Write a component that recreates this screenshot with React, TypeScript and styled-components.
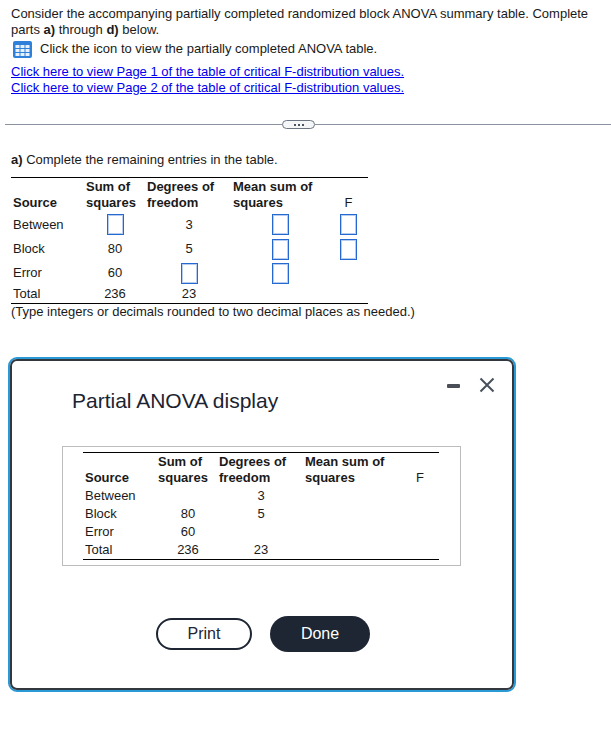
import React from "react";
import styled, { createGlobalStyle } from "styled-components";

const Global = createGlobalStyle`
  html, body { margin: 0; padding: 0; background: #fff; }
  body { font-family: "Liberation Sans", Arial, sans-serif; font-size: 13px; color: #1a1a1a; }
`;

const Page = styled.div`
  width: 611px;
  height: 752px;
  overflow: hidden;
  display: flex;
  flex-direction: column;
`;

const Intro = styled.div`
  padding: 6px 0 0 11px;
  line-height: 16px;
`;

const IconLine = styled.div`
  display: flex;
  align-items: center;
  gap: 8px;
  height: 20px;
  margin: 1px 0 5px 2px;
`;

const LinkLine = styled.a`
  display: block;
  color: #0000ee;
  text-decoration: underline;
  line-height: 16px;
  height: 16px;
`;

const Divider = styled.div`
  margin: 24px 0 0 5px;
  height: 9px;
  display: flex;
  align-items: center;
  &::before, &::after {
    content: "";
    height: 1px;
    background: #8b93a1;
  }
  &::before { flex: 0 0 277px; }
  &::after { flex: 1; }
`;

const Pill = styled.span`
  width: 33px;
  height: 9px;
  box-sizing: border-box;
  border: 1px solid #6b7583;
  border-radius: 5px;
  background: #f4f6f8;
  display: flex;
  align-items: center;
  justify-content: center;
  gap: 2px;
`;

const Dot = styled.i`
  width: 2px;
  height: 2px;
  background: #4a5563;
`;

const Part = styled.section`
  padding: 23px 0 0 11px;
`;

const PartTitle = styled.div`
  line-height: 16px;
  margin-bottom: 9px;
`;

const Table = styled.table<{ $width: number }>`
  width: ${(p) => p.$width}px;
  table-layout: fixed;
  border-collapse: collapse;
  border-top: 1px solid #000;
  border-bottom: 1px solid #000;
  font-size: 13px;
  line-height: 16px;
`;

const Head = styled.th<{ $pad?: number; $center?: boolean }>`
  font-weight: bold;
  text-align: ${(p) => (p.$center ? "center" : "left")};
  vertical-align: bottom;
  padding: 1px 0 1px ${(p) => p.$pad ?? 0}px;
  white-space: nowrap;
`;

const PlainHead = styled(Head)`
  font-weight: normal;
`;

const Row = styled.tr<{ $h: number }>`
  height: ${(p) => p.$h}px;
`;

const Cell = styled.td<{ $center?: boolean }>`
  padding: 0;
  text-align: ${(p) => (p.$center ? "center" : "left")};
  vertical-align: middle;
`;

const Label = styled(Cell)`
  padding-left: 2px;
`;

const Answer = styled.span`
  display: block;
  margin: 0 auto;
  box-sizing: border-box;
  width: 17px;
  height: 21px;
  border: 1px solid #2568d0;
  box-shadow: inset 0 0 0 1px rgba(47, 111, 208, 0.35);
  background: #fff;
`;

const Note = styled.div`
  line-height: 16px;
  margin: 0;
  color: #1a1a1a;
`;

const Modal = styled.div`
  box-sizing: border-box;
  margin: 37px 0 0 8px;
  width: 508px;
  height: 335px;
  border: 2px solid #2a9ad6;
  border-radius: 9px;
  background: #fff;
`;

const ModalInner = styled.div`
  box-sizing: border-box;
  height: 100%;
  border: 2px solid #33383f;
  border-radius: 7px;
  display: flex;
  flex-direction: column;
`;

const ModalHeader = styled.div`
  display: flex;
  align-items: flex-start;
  justify-content: space-between;
  padding: 16px 17px 0 60px;
  height: 85px;
  box-sizing: border-box;
`;

const ModalTitle = styled.h2`
  margin: 11px 0 0;
  font-size: 21px;
  line-height: 26px;
  font-weight: normal;
  color: #1c2431;
`;

const Controls = styled.div`
  display: flex;
  align-items: center;
  gap: 19px;
`;

const Minimize = styled.span`
  width: 13px;
  height: 4px;
  margin-top: 2px;
  background: #4a4f57;
  border-radius: 1px;
`;

const TableBox = styled.div`
  box-sizing: border-box;
  margin: 0 0 0 50px;
  width: 399px;
  height: 120px;
  border: 1px solid #bcbcbc;
  padding: 5px 0 0 20px;
`;

const Buttons = styled.div`
  display: flex;
  align-items: center;
  gap: 18px;
  margin: 50px 0 0 144px;
`;

const PrintButton = styled.button`
  box-sizing: border-box;
  width: 96px;
  height: 32px;
  border: 2px solid #1e2533;
  border-radius: 16px;
  background: #fff;
  color: #1e2533;
  font: 16px "Liberation Sans", Arial, sans-serif;
  padding: 1px 0 0;
`;

const DoneButton = styled.button`
  box-sizing: border-box;
  width: 100px;
  height: 36px;
  border: 0;
  border-radius: 18px;
  background: #1e2533;
  color: #fff;
  font: 16px "Liberation Sans", Arial, sans-serif;
  padding: 1px 0 0;
`;

const GridIcon = () => (
  <svg width="19" height="17" viewBox="0 0 19 17" aria-hidden="true">
    <rect width="19" height="17" rx="2" fill="#2f80d8" />
    {[4, 8, 12].map((y) =>
      [2.5, 7.5, 12.5].map((x) => <rect key={`${x}-${y}`} x={x} y={y} width="4" height="3" fill="#e8f2fc" />)
    )}
  </svg>
);

const CloseIcon = () => (
  <svg width="16" height="16" viewBox="0 0 16 16" aria-hidden="true">
    <path d="M1.5 1.5 L14.5 14.5 M14.5 1.5 L1.5 14.5" stroke="#47505c" strokeWidth="2" fill="none" />
  </svg>
);

const QuestionTable = () => (
  <Table $width={357}>
    <colgroup>
      <col style={{ width: 73 }} />
      <col style={{ width: 62 }} />
      <col style={{ width: 86 }} />
      <col style={{ width: 97 }} />
      <col style={{ width: 39 }} />
    </colgroup>
    <thead>
      <tr>
        <Head $pad={2}>Source</Head>
        <Head $pad={2}>Sum of<br />squares</Head>
        <Head $pad={1}>Degrees of<br />freedom</Head>
        <Head $pad={1}>Mean sum of<br />squares</Head>
        <PlainHead $center>F</PlainHead>
      </tr>
    </thead>
    <tbody>
      <Row $h={25}>
        <Label>Between</Label>
        <Cell $center><Answer /></Cell>
        <Cell $center>3</Cell>
        <Cell $center><Answer /></Cell>
        <Cell $center><Answer /></Cell>
      </Row>
      <Row $h={24}>
        <Label>Block</Label>
        <Cell $center>80</Cell>
        <Cell $center>5</Cell>
        <Cell $center><Answer /></Cell>
        <Cell $center><Answer /></Cell>
      </Row>
      <Row $h={24}>
        <Label>Error</Label>
        <Cell $center>60</Cell>
        <Cell $center><Answer /></Cell>
        <Cell $center><Answer /></Cell>
        <Cell />
      </Row>
      <Row $h={18}>
        <Label>Total</Label>
        <Cell $center>236</Cell>
        <Cell $center>23</Cell>
        <Cell />
        <Cell />
      </Row>
    </tbody>
  </Table>
);

const DisplayTable = () => (
  <Table $width={356}>
    <colgroup>
      <col style={{ width: 75 }} />
      <col style={{ width: 60 }} />
      <col style={{ width: 86 }} />
      <col style={{ width: 97 }} />
      <col style={{ width: 38 }} />
    </colgroup>
    <thead>
      <tr>
        <Head $pad={2}>Source</Head>
        <Head>Sum of<br />squares</Head>
        <Head $pad={1}>Degrees of<br />freedom</Head>
        <Head $pad={1}>Mean sum of<br />squares</Head>
        <PlainHead $center>F</PlainHead>
      </tr>
    </thead>
    <tbody>
      <Row $h={18}><Label>Between</Label><Cell /><Cell $center>3</Cell><Cell /><Cell /></Row>
      <Row $h={18}><Label>Block</Label><Cell $center>80</Cell><Cell $center>5</Cell><Cell /><Cell /></Row>
      <Row $h={18}><Label>Error</Label><Cell $center>60</Cell><Cell /><Cell /><Cell /></Row>
      <Row $h={19}><Label>Total</Label><Cell $center>236</Cell><Cell $center>23</Cell><Cell /><Cell /></Row>
    </tbody>
  </Table>
);

export default function App() {
  return (
    <Page>
      <Global />
      <Intro>
        <div>Consider the accompanying partially completed randomized block ANOVA summary table. Complete</div>
        <div>parts <b>a)</b> through <b>d)</b> below.</div>
        <IconLine><GridIcon />Click the icon to view the partially completed ANOVA table.</IconLine>
        <LinkLine href="#">Click here to view Page 1 of the table of critical F-distribution values.</LinkLine>
        <LinkLine href="#">Click here to view Page 2 of the table of critical F-distribution values.</LinkLine>
      </Intro>
      <Divider>
        <Pill><Dot /><Dot /><Dot /></Pill>
      </Divider>
      <Part>
        <PartTitle><b>a)</b> Complete the remaining entries in the table.</PartTitle>
        <QuestionTable />
        <Note>(Type integers or decimals rounded to two decimal places as needed.)</Note>
      </Part>
      <Modal>
        <ModalInner>
          <ModalHeader>
            <ModalTitle>Partial ANOVA display</ModalTitle>
            <Controls>
              <Minimize />
              <CloseIcon />
            </Controls>
          </ModalHeader>
          <TableBox>
            <DisplayTable />
          </TableBox>
          <Buttons>
            <PrintButton>Print</PrintButton>
            <DoneButton>Done</DoneButton>
          </Buttons>
        </ModalInner>
      </Modal>
    </Page>
  );
}
